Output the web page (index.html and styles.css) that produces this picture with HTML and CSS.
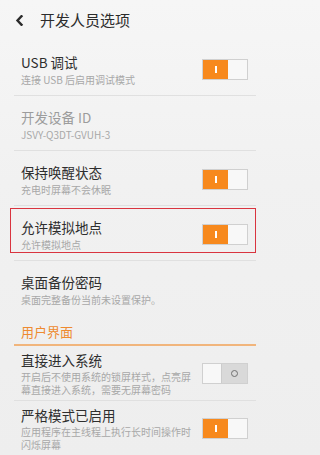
FILE: index.html
```html
<!DOCTYPE html>
<html lang="zh-CN">
<head>
<meta charset="utf-8">
<title>开发人员选项</title>
<link rel="stylesheet" href="styles.css">
</head>
<body>
<div class="screen">
  <header class="header">
    <svg class="back" width="9" height="11" viewBox="0 0 9 11"><path d="M6.5 1.2 L2.5 5.5 L6.5 9.8" fill="none" stroke="#2b2b2b" stroke-width="2.4" stroke-linecap="square"/></svg>
    <span class="header-title">开发人员选项</span>
  </header>

  <div class="row">
    <div class="text">
      <div class="title">USB 调试</div>
      <div class="sub">连接 USB 后启用调试模式</div>
    </div>
    <div class="toggle on"><span class="knob-on"><i></i></span><span class="rest"></span></div>
  </div>

  <div class="row">
    <div class="text">
      <div class="title disabled">开发设备 ID</div>
      <div class="sub">JSVY-Q3DT-GVUH-3</div>
    </div>
  </div>

  <div class="row">
    <div class="text">
      <div class="title">保持唤醒状态</div>
      <div class="sub">充电时屏幕不会休眠</div>
    </div>
    <div class="toggle on"><span class="knob-on"><i></i></span><span class="rest"></span></div>
  </div>

  <div class="row highlighted">
    <div class="text">
      <div class="title">允许模拟地点</div>
      <div class="sub">允许模拟地点</div>
    </div>
    <div class="toggle on"><span class="knob-on"><i></i></span><span class="rest"></span></div>
    <div class="mark"></div>
  </div>

  <div class="row last">
    <div class="text">
      <div class="title">桌面备份密码</div>
      <div class="sub">桌面完整备份当前未设置保护。</div>
    </div>
  </div>

  <div class="category">用户界面</div>

  <div class="row tall">
    <div class="text">
      <div class="title">直接进入系统</div>
      <div class="sub">开启后不使用系统的锁屏样式，点亮屏幕直接进入系统，需要无屏幕密码</div>
    </div>
    <div class="toggle off"><span class="rest"></span><span class="knob-off"><i></i></span></div>
  </div>

  <div class="row tall">
    <div class="text">
      <div class="title">严格模式已启用</div>
      <div class="sub">应用程序在主线程上执行长时间操作时闪烁屏幕</div>
    </div>
    <div class="toggle on"><span class="knob-on"><i></i></span><span class="rest"></span></div>
  </div>
</div>
</body>
</html>
```

FILE: styles.css
```css
html, body {
  margin: 0;
  padding: 0;
}
body {
  width: 270px;
  height: 455px;
  overflow: hidden;
  font-family: "Noto Sans CJK SC", "Noto Sans", sans-serif;
  background: linear-gradient(180deg, #f6f6f6 0%, #f1f1f1 40%, #eeeeee 100%);
}
.screen {
  display: flex;
  flex-direction: column;
}
.header {
  height: 41px;
  display: flex;
  align-items: center;
  padding-left: 15px;
  box-sizing: border-box;
  padding-bottom: 1px;
}
.back {
  display: block;
  margin-right: 16px;
}
.header-title {
  font-size: 15px;
  line-height: 18px;
  color: #2c2c2c;
}
.row {
  position: relative;
  margin: 0 14px;
  padding: 12px 8px 9px 7px;
  border-bottom: 1px solid #e0e0e0;
  display: flex;
  align-items: center;
  gap: 8px;
}
.row.last {
  border-bottom: none;
}
.text {
  flex: 1;
  display: flex;
  flex-direction: column;
  gap: 2px;
  min-width: 0;
}
.title {
  font-size: 13.5px;
  line-height: 18px;
  color: #2e2e2e;
}
.title.disabled {
  color: #9c9c9c;
}
.sub {
  font-size: 10px;
  line-height: 13px;
  color: #a8a8a8;
}
.row.tall {
  padding-top: 5px;
  padding-bottom: 4px;
}
.row.tall .text {
  gap: 1px;
}
.toggle {
  flex: none;
  width: 46px;
  height: 21px;
  box-sizing: border-box;
  border: 1px solid #d0d0d0;
  display: flex;
  background: #f8f8f8;
}
.knob-on {
  width: 25px;
  background: #f7891d;
  display: flex;
  align-items: center;
  justify-content: center;
}
.knob-on i {
  display: block;
  width: 2px;
  height: 7px;
  background: #ffffff;
}
.rest {
  flex: 1;
  background: #f8f8f8;
}
.knob-off {
  width: 25px;
  background: #d9d9d9;
  border-left: 1px solid #cccccc;
  display: flex;
  align-items: center;
  justify-content: center;
}
.knob-off i {
  display: block;
  width: 5px;
  height: 5px;
  border-radius: 50%;
  border: 1.5px solid #707070;
}
.mark {
  position: absolute;
  left: -4px;
  right: 0;
  top: 2px;
  bottom: 7px;
  border: 1.5px solid #d9343f;
}
.category {
  margin: 0 14px;
  padding: 8px 7px 3px;
  font-size: 13px;
  line-height: 18px;
  color: #ee8a30;
  border-bottom: 2px solid #f1b57c;
}
```
